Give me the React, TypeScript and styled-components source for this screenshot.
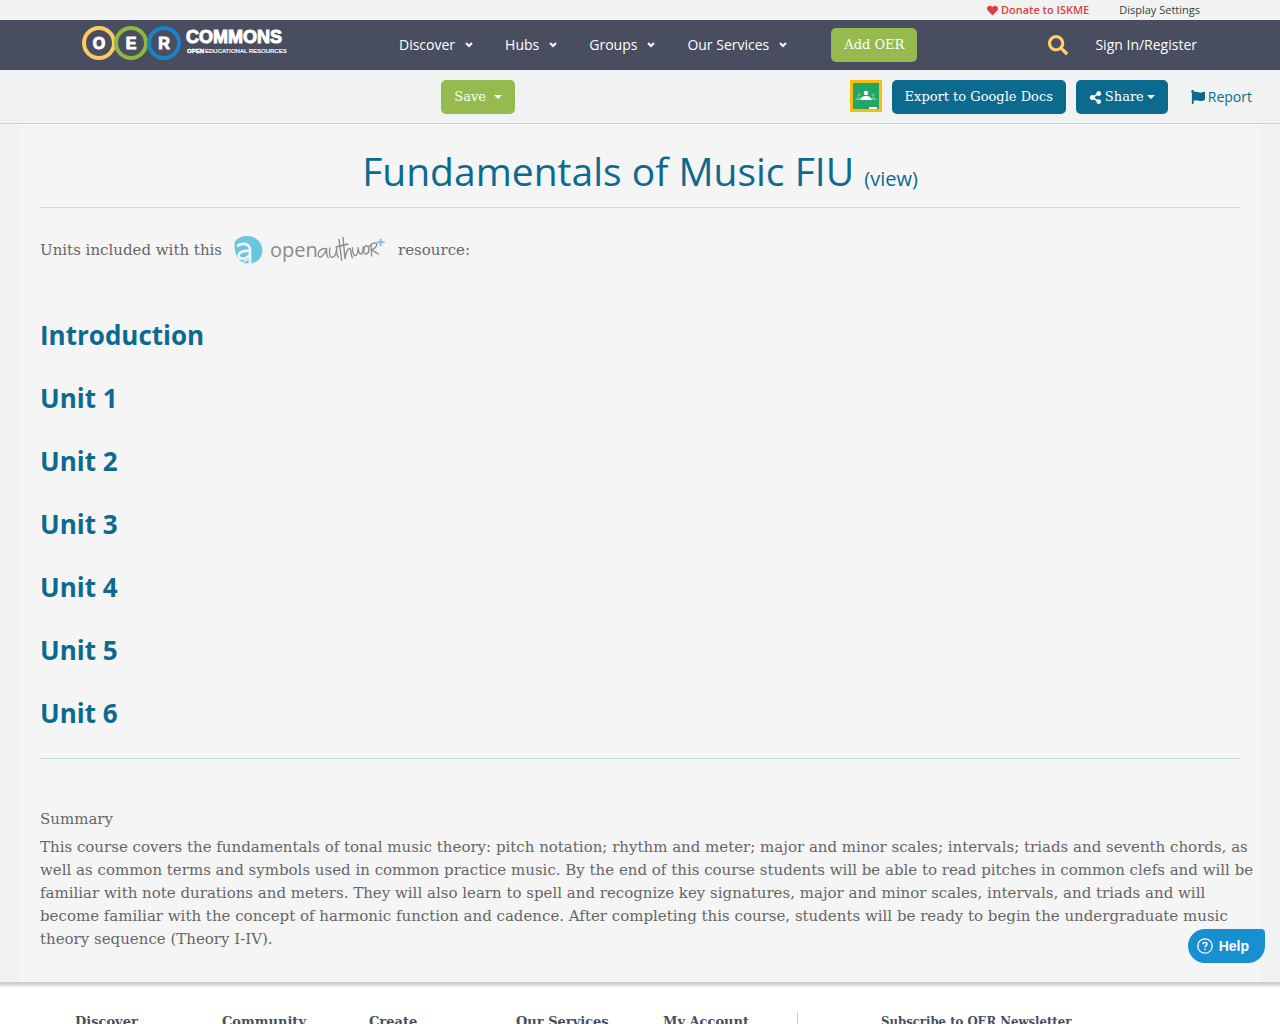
import React from 'react';
import styled, { createGlobalStyle } from 'styled-components';
import { FaHeart, FaShareAlt, FaFlag, FaSearch } from 'react-icons/fa';

const sans = '"Open Sans", "Noto Sans", sans-serif';
const slab = '"DejaVu Serif", serif';
const slabNarrow = '"DejaVu Serif Condensed", "DejaVu Serif", serif';
const blue = '#0c6a8f';
const green = '#95bb4e';
const navy = '#484e60';

const GlobalStyle = createGlobalStyle`
  * { box-sizing: border-box; }
  body { margin: 0; background: #fff; color: #666; font-family: ${slab}; font-size: 15px; line-height: 23px; }
  a { text-decoration: none; color: inherit; }
  button { cursor: pointer; }
  svg { flex: none; }
`;

const Page = styled.div`
  background: #f0f3f2;
`;

const UtilityBar = styled.div`
  display: flex;
  justify-content: flex-end;
  gap: 30px;
  height: 20px;
  padding: 0 80px;
  font: 11px/20px ${sans};
  color: #3c3c3c;
`;

const DonateLink = styled.a`
  display: flex;
  align-items: center;
  gap: 3px;
  font-weight: 600;
  color: #db4040;
`;

const Header = styled.header`
  display: flex;
  align-items: center;
  height: 50px;
  padding: 0 83px 0 82px;
  background: ${navy};
  color: #fff;
  font: 14px/20px ${sans};
  white-space: nowrap;
`;

const Nav = styled.nav`
  display: flex;
  align-items: center;
  gap: 32px;
  margin-left: 109px;
`;

const NavLink = styled.a`
  display: flex;
  align-items: center;
  gap: 10px;
`;

const Button = styled.button<{ $color: string }>`
  display: inline-flex;
  align-items: center;
  justify-content: center;
  gap: 3px;
  height: 34px;
  padding: 0 13px;
  border: 0;
  border-radius: 5px;
  background: ${(p) => p.$color};
  color: #fff;
  font: 13px/20px ${slab};
  white-space: nowrap;
`;

const AddButton = styled(Button)`
  margin-left: 44px;
`;

const Account = styled.div`
  display: flex;
  align-items: center;
  gap: 27px;
  margin-left: auto;
`;

const IconButton = styled.button`
  display: flex;
  padding: 0;
  border: 0;
  background: none;
  color: #ffd069;
`;

const Toolbar = styled.div`
  display: grid;
  grid-template-columns: 515fr 765fr;
  height: 54px;
  padding-top: 10px;
  border-bottom: 1px solid #cdd2d1;
`;

const ToolGroup = styled.div`
  display: flex;
  justify-content: flex-end;
  gap: 10px;
`;

const RightTools = styled(ToolGroup)`
  padding-right: 28px;
`;

const SaveButton = styled(Button)`
  gap: 8px;
`;

const ReportLink = styled.a`
  display: flex;
  align-items: center;
  gap: 3px;
  height: 34px;
  margin-left: 13px;
  color: ${blue};
  font: 14px/20px ${sans};
`;

const Main = styled.main`
  margin: 0 20px;
  padding: 17px 20px 31px;
  background: #f5f5f5;
`;

const Title = styled.h1`
  margin: 0;
  padding-bottom: 6px;
  border-bottom: 1px solid #c5dadd;
  color: ${blue};
  font: 400 39px/60px ${sans};
  text-align: center;

  small { font-size: 20px; line-height: 20px; }
`;

const Included = styled.p`
  display: flex;
  align-items: center;
  gap: 12px;
  height: 32px;
  margin: 26px 0 53px;
`;

const Units = styled.ul`
  margin: 0;
  padding: 0 0 28px;
  list-style: none;
  border-bottom: 1px solid #bfdbe3;
`;

const Unit = styled.li`
  color: ${blue};
  font: 700 26px/33px ${sans};

  & + & { margin-top: 30px; }
`;

const SummaryTitle = styled.h2`
  margin: 49px 0 5px;
  font: 400 15px/23px ${slab};
`;

const SummaryText = styled.p`
  margin: 0 -15px 0 0;
`;

const Footer = styled.footer`
  display: flex;
  padding: 29px 75px 0;
  background: linear-gradient(#ccc, #fff 5px);
  border-top: 1px solid #ccc;
  color: ${navy};
`;

const FooterLinks = styled.div`
  display: grid;
  grid-template-columns: repeat(4, 147px) 1fr;
  flex: 0 0 723px;
  border-right: 1px solid #ccc;
`;

const FooterTitle = styled.h3<{ $narrow?: boolean }>`
  margin: 0;
  font: 700 13px/20px ${(p) => (p.$narrow ? slabNarrow : slab)};
  white-space: nowrap;
`;

const Newsletter = styled.div`
  margin-left: 83px;
`;

const HelpButton = styled.button`
  position: fixed;
  right: 15px;
  bottom: 61px;
  display: flex;
  align-items: center;
  gap: 6px;
  height: 34px;
  padding: 0 16px 0 9px;
  border: 0;
  border-radius: 17px 4px 17px 17px;
  background: #188fd1;
  color: #fff;
  font: 700 14px/20px "Liberation Sans", Arial, sans-serif;
`;

const Chevron = () => (
  <svg width="8" height="6" viewBox="0 0 8 6" fill="none" stroke="currentColor" strokeWidth="2">
    <path d="M1 1l3 3 3-3" />
  </svg>
);

const Caret = () => (
  <svg width="8" height="4" viewBox="0 0 8 4" fill="currentColor">
    <path d="M0 0h8L4 4z" />
  </svg>
);

const rings = [
  { letter: 'O', x: 17, color: '#fdca62' },
  { letter: 'E', x: 49, color: '#8fb63e' },
  { letter: 'R', x: 82, color: '#1c83c9' },
];

const SiteLogo = () => (
  <svg width="208" height="38" viewBox="0 0 208 38" fontFamily="Liberation Sans, Arial, sans-serif" fontWeight="700" fill="#fff" role="img" aria-label="OER Commons">
    {rings.map((r) => (
      <g key={r.letter}>
        <circle cx={r.x} cy="17" r="15" fill={navy} stroke={r.color} strokeWidth="4" />
        <text x={r.x} y="23" textAnchor="middle" fontSize="16" stroke="#fff" strokeWidth="1">{r.letter}</text>
      </g>
    ))}
    <text x="104" y="17" fontSize="18" stroke="#fff" strokeWidth="1">COMMONS</text>
    <text x="105" y="27" fontSize="6" stroke="#fff" strokeWidth="0.4">OPEN</text>
    <text x="123" y="27" fontSize="6" fontWeight="400" stroke="#fff" strokeWidth="0.2">EDUCATIONAL RESOURCES</text>
  </svg>
);

const OpenAuthorLogo = () => (
  <svg width="152" height="30" viewBox="38 30 456 90" role="img" aria-label="Open Author">
    <path d="M40 50Q54 33 78 33C104 33 123 52 123 76C123 96 112 109 94 115H70C48 107 37 82 40 50Z" fill="#68c6de" />
    <g fill="none" stroke="#f5f5f5" strokeWidth="8">
      <path d="M47 63Q66 52 79 60Q86 65 86 76V116" />
      <path d="M84 78C62 76 50 84 52 93C54 105 76 103 84 91" />
      <path d="M66 112Q72 106 82 104" strokeWidth="4" />
    </g>
    <text x="146" y="97" fontFamily={sans} fontSize="60" fill="#8b8b8b">open</text>
    <g fill="none" stroke="#8b8b8b" strokeWidth="4" strokeLinecap="round" strokeLinejoin="round">
      <path d="M315 71C298 68 288 81 291 92C295 103 310 90 316 72C315 84 317 94 321 98" />
      <path d="M326 69C323 86 325 98 333 97C342 96 345 82 346 69C345 82 347 92 351 97" />
      <path d="M353 43L361 106M344 66Q362 61 380 57" />
      <path d="M365 37L371 101C374 80 381 68 386 71C392 77 387 94 394 98" />
      <path d="M393 68C393 84 398 95 404 91C410 86 411 77 410 68C412 82 416 91 421 86C425 81 426 73 426 65" />
      <path d="M433 62C424 72 426 89 435 87C446 83 445 61 433 62" />
      <path d="M449 60L451 93M443 64C450 54 466 50 466 58C466 66 457 72 452 74Q460 81 472 87" />
    </g>
    <path d="M478 41V63M467 52H490" stroke="#70cce2" strokeWidth="6" />
  </svg>
);

const ClassroomIcon = () => (
  <svg width="32" height="32" viewBox="0 0 32 32" role="img" aria-label="Google Classroom">
    <path fill="#fbbc12" d="M0 0h32v32H0z" />
    <path fill="#23a566" d="M3 3h26v26H3z" />
    <g fill="#6bc39a">
      <circle cx="9" cy="15" r="1.5" />
      <circle cx="23" cy="15" r="1.5" />
      <path d="M5 20q1-3 5-3v3zM27 20q-1-3-5-3v3z" />
    </g>
    <circle cx="16" cy="13" r="2.3" fill="#fff" />
    <path fill="#fff" d="M10 20q1-4 6-4t6 4zM19 27h8v2h-8z" />
  </svg>
);

const HelpIcon = () => (
  <svg width="16" height="16" viewBox="0 0 16 16" fill="none" stroke="currentColor">
    <circle cx="8" cy="8" r="7.2" strokeWidth="1.3" />
    <path d="M6 6.3C6 4 10 4 10 6.2C10 7.6 8 7.6 8 9.3M8 10.8v1.4" strokeWidth="1.5" />
  </svg>
);

const navItems = ['Discover', 'Hubs', 'Groups', 'Our Services'];
const units = ['Introduction', 'Unit 1', 'Unit 2', 'Unit 3', 'Unit 4', 'Unit 5', 'Unit 6'];
const footerItems = ['Discover', 'Community', 'Create', 'Our Services', 'My Account'];

export default function App() {
  return (
    <Page>
      <GlobalStyle />
      <UtilityBar>
        <DonateLink href="#donate"><FaHeart size={11} />Donate to ISKME</DonateLink>
        <a href="#display">Display Settings</a>
      </UtilityBar>
      <Header>
        <SiteLogo />
        <Nav>
          {navItems.map((item) => (
            <NavLink href="#menu" key={item}>{item}<Chevron /></NavLink>
          ))}
        </Nav>
        <AddButton $color={green}>Add OER</AddButton>
        <Account>
          <IconButton aria-label="Search"><FaSearch size={20} /></IconButton>
          <a href="#signin">Sign In/Register</a>
        </Account>
      </Header>
      <Toolbar>
        <ToolGroup>
          <SaveButton $color={green}>Save<Caret /></SaveButton>
        </ToolGroup>
        <RightTools>
          <a href="#classroom"><ClassroomIcon /></a>
          <Button $color={blue}>Export to Google Docs</Button>
          <Button $color={blue}><FaShareAlt size={13} />Share<Caret /></Button>
          <ReportLink href="#report"><FaFlag size={14} />Report</ReportLink>
        </RightTools>
      </Toolbar>
      <Main>
        <Title><a href="#resource">Fundamentals of Music FIU <small>(view)</small></a></Title>
        <Included>
          <span>Units included with this</span>
          <OpenAuthorLogo />
          <span>resource:</span>
        </Included>
        <Units>
          {units.map((unit) => (
            <Unit key={unit}><a href="#unit">{unit}</a></Unit>
          ))}
        </Units>
        <SummaryTitle>Summary</SummaryTitle>
        <SummaryText>
          This course covers the fundamentals of tonal music theory: pitch notation; rhythm and meter; major and minor scales; intervals; triads and seventh chords, as well as common terms and symbols used in common practice music. By the end of this course students will be able to read pitches in common clefs and will be familiar with note durations and meters. They will also learn to spell and recognize key signatures, major and minor scales, intervals, and triads and will become familiar with the concept of harmonic function and cadence. After completing this course, students will be ready to begin the undergraduate music theory sequence (Theory I-IV).
        </SummaryText>
      </Main>
      <Footer>
        <FooterLinks>
          {footerItems.map((item) => (
            <FooterTitle key={item}>{item}</FooterTitle>
          ))}
        </FooterLinks>
        <Newsletter>
          <FooterTitle $narrow>Subscribe to OER Newsletter</FooterTitle>
        </Newsletter>
      </Footer>
      <HelpButton><HelpIcon />Help</HelpButton>
    </Page>
  );
}
